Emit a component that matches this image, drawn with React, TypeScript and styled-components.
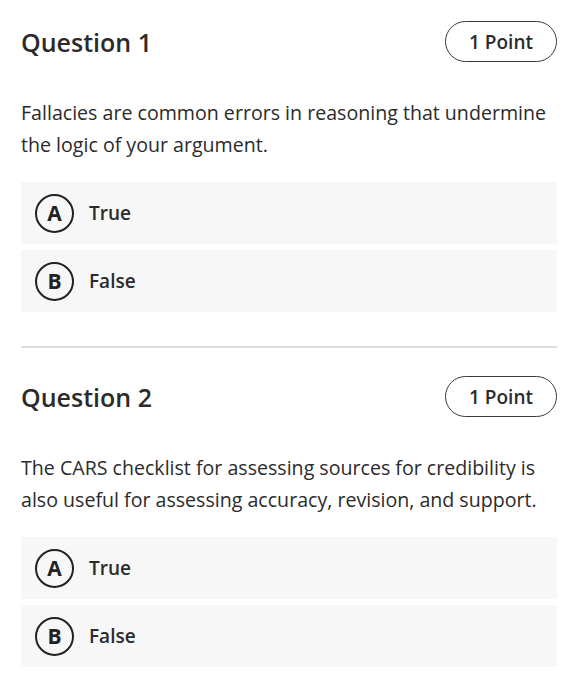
import React from 'react';
import styled, { createGlobalStyle } from 'styled-components';

const GlobalStyle = createGlobalStyle`
    body {
        margin: 0;
        background: #ffffff;
        font-family: "Open Sans", "Liberation Sans", sans-serif;
        color: #2b2b2b;
    }
`;

const Page = styled.div`
    padding: 21px 26px 0 21px;
`;

const Header = styled.div`
    display: flex;
    align-items: center;
    justify-content: space-between;
`;

const Title = styled.h2`
    margin: 0;
    font-size: 25px;
    font-weight: 600;
    color: #2b2b2b;
`;

const Badge = styled.div`
    box-sizing: border-box;
    height: 41px;
    width: 112px;
    border: 1.5px solid #3a3a3a;
    border-radius: 21px;
    display: flex;
    align-items: center;
    justify-content: center;
    font-size: 19px;
    font-weight: 600;
    color: #2b2b2b;
`;

const Prompt = styled.p`
    margin: 35px 0 21px;
    font-size: 19.6px;
    line-height: 32px;
    color: #2b2b2b;
`;

const Options = styled.div`
    display: flex;
    flex-direction: column;
    gap: 6px;
`;

const Option = styled.div`
    height: 62px;
    background: #f7f7f7;
    display: flex;
    align-items: center;
    padding-left: 14px;
    gap: 15px;
`;

const Letter = styled.span`
    box-sizing: border-box;
    width: 39px;
    height: 39px;
    border: 2.5px solid #222;
    border-radius: 50%;
    display: flex;
    align-items: center;
    justify-content: center;
    font-size: 21px;
    font-weight: 700;
    color: #222;
`;

const Label = styled.span`
    font-size: 19px;
    font-weight: 600;
    color: #2b2b2b;
`;

const Divider = styled.hr`
    margin: 34px 0 28px;
    border: none;
    height: 2px;
    background: #dcdcdc;
`;

const questions = [
    {
        title: 'Question 1',
        text: 'Fallacies are common errors in reasoning that undermine the logic of your argument.',
    },
    {
        title: 'Question 2',
        text: 'The CARS checklist for assessing sources for credibility is also useful for assessing accuracy, revision, and support.',
    },
];

const choices = [
    { key: 'A', label: 'True' },
    { key: 'B', label: 'False' },
];

export default function App() {
    return (
        <Page>
            <GlobalStyle />
            {questions.map((q, i) => (
                <section key={q.title}>
                    {i > 0 && <Divider />}
                    <Header>
                        <Title>{q.title}</Title>
                        <Badge>1 Point</Badge>
                    </Header>
                    <Prompt>{q.text}</Prompt>
                    <Options>
                        {choices.map((c) => (
                            <Option key={c.key}>
                                <Letter>{c.key}</Letter>
                                <Label>{c.label}</Label>
                            </Option>
                        ))}
                    </Options>
                </section>
            ))}
        </Page>
    );
}
